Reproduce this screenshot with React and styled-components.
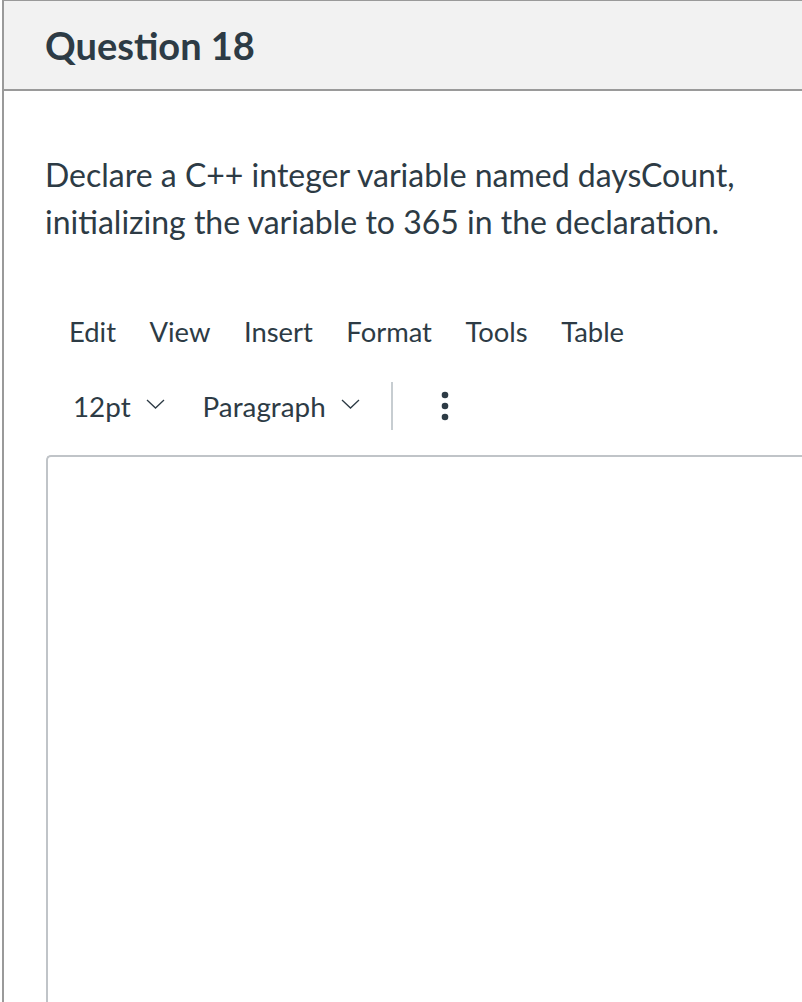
import styled, { createGlobalStyle } from 'styled-components';

const Global = createGlobalStyle`
  html, body {
    margin: 0;
    padding: 0;
    background: #fff;
    overflow: hidden;
  }
  body {
    font-family: Lato, "Open Sans", "Liberation Sans", sans-serif;
    color: #2d3b45;
  }
`;

const Card = styled.div`
  margin-left: 2px;
  width: 900px;
  height: 1002px;
  border-left: 2px solid #9a9a9a;
  border-top: 1px solid #9a9a9a;
  box-sizing: border-box;
`;

const Header = styled.div`
  height: 88px;
  background: #f2f2f2;
  border-bottom: 2px solid #9a9a9a;
  display: flex;
  align-items: center;
  padding-left: 41px;
`;

const Title = styled.h2`
  margin: 0;
  font-size: 38px;
  font-weight: 700;
  color: #2d3b45;
`;

const Body = styled.div`
  padding: 60px 0 0 41px;
`;

const Prompt = styled.p`
  margin: 0;
  font-size: 32px;
  line-height: 47px;
  width: 740px;
`;

const Menubar = styled.div`
  display: flex;
  gap: 33.5px;
  margin-top: 71px;
  padding-left: 24px;
  font-size: 27.4px;
  line-height: 32px;
`;

const MenuItem = styled.span`
  cursor: pointer;
`;

const Toolbar = styled.div`
  display: flex;
  align-items: center;
  height: 48px;
  margin-top: 34px;
  padding-left: 28px;
  font-size: 27.8px;
`;

const Select = styled.span`
  display: flex;
  align-items: center;
  gap: 15px;
  margin-right: ${(p) => p.$gap || 0}px;

  svg {
    margin-top: -5px;
  }
`;

const Divider = styled.span`
  width: 2px;
  height: 48px;
  background: #c7cdd1;
  margin: 0 48px 0 31px;
`;

const Editor = styled.div`
  margin-top: 25px;
  margin-left: 1px;
  height: 600px;
  border: 2px solid #c0c4c8;
  border-right: none;
  border-radius: 5px 0 0 0;
`;

const Chevron = () => (
  <svg width="19" height="10" viewBox="0 0 19 10" fill="none">
    <path d="M1 1 L9.5 9 L18 1" stroke="#2d3b45" strokeWidth="1.3" />
  </svg>
);

const Kebab = () => (
  <svg width="8" height="30" viewBox="0 0 8 30">
    <circle cx="4" cy="4" r="3.3" fill="#2d3b45" />
    <circle cx="4" cy="15" r="3.3" fill="#2d3b45" />
    <circle cx="4" cy="26" r="3.3" fill="#2d3b45" />
  </svg>
);

export default function App() {
  return (
    <>
      <Global />
      <Card>
        <Header>
          <Title>Question 18</Title>
        </Header>
        <Body>
          <Prompt>
            Declare a C++ integer variable named daysCount, initializing the
            variable to 365 in the declaration.
          </Prompt>
          <Menubar>
            {['Edit', 'View', 'Insert', 'Format', 'Tools', 'Table'].map((m) => (
              <MenuItem key={m}>{m}</MenuItem>
            ))}
          </Menubar>
          <Toolbar>
            <Select $gap={38}>
              12pt <Chevron />
            </Select>
            <Select>
              Paragraph <Chevron />
            </Select>
            <Divider />
            <Kebab />
          </Toolbar>
          <Editor />
        </Body>
      </Card>
    </>
  );
}
